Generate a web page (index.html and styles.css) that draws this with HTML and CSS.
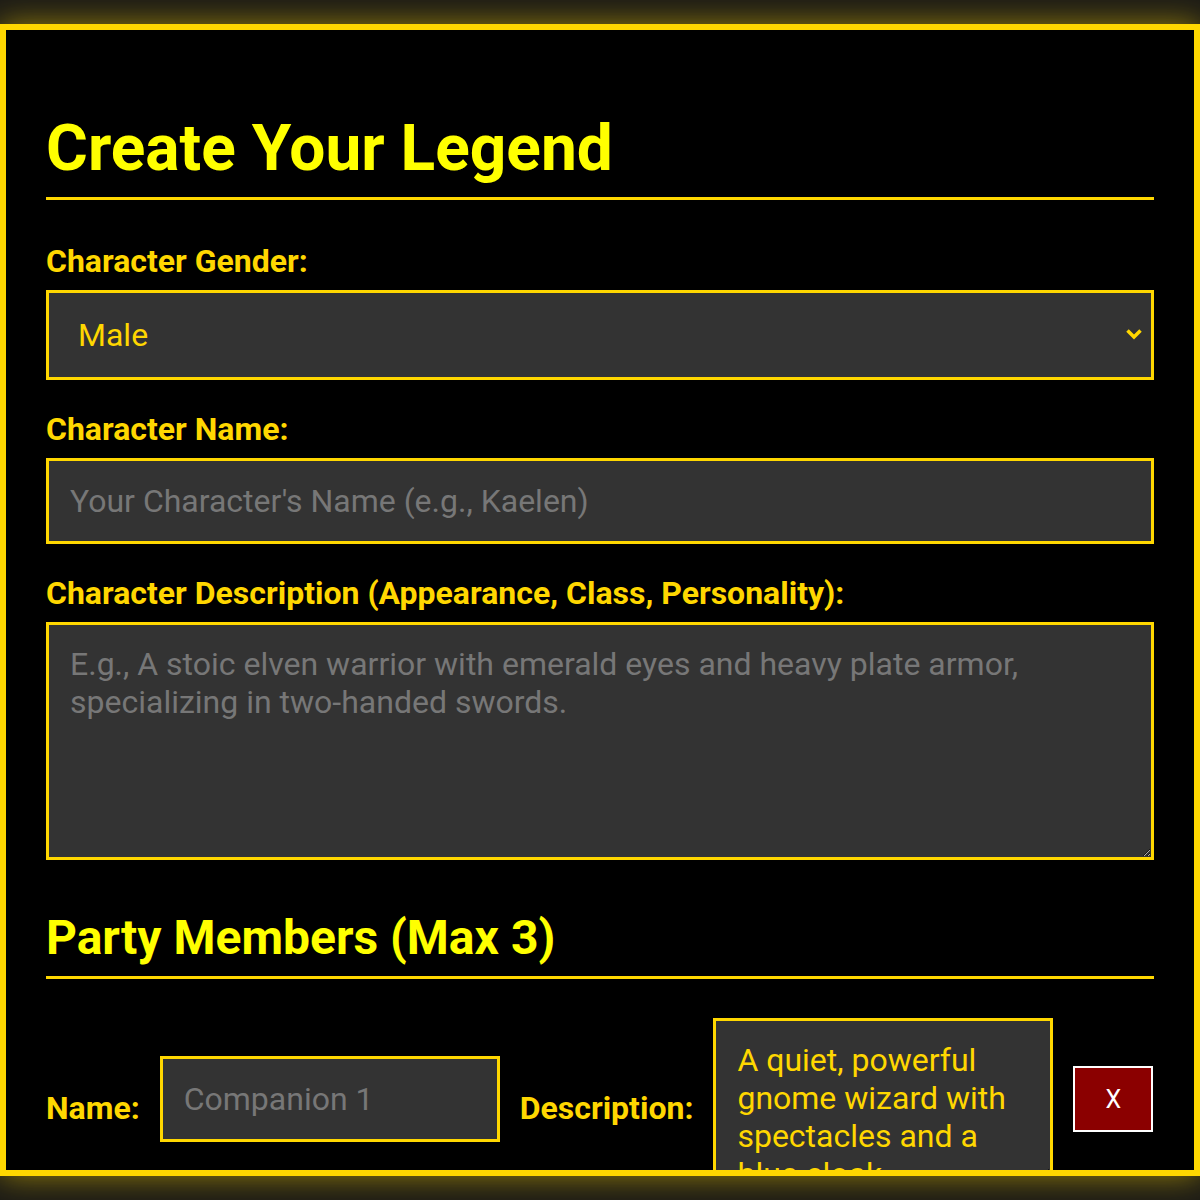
FILE: index.html
```html
<!DOCTYPE html>
<html lang="en">
<head>
<meta charset="utf-8">
<title>Create Your Legend</title>
<link rel="stylesheet" href="styles.css">
</head>
<body>
<div class="panel">
  <h1 class="title">Create Your Legend</h1>

  <div class="field">
    <label class="label" for="gender">Character Gender:</label>
    <div class="select-wrap">
      <select id="gender" class="control select">
        <option>Male</option>
        <option>Female</option>
        <option>Non-binary</option>
      </select>
      <svg class="chev" viewBox="0 0 18 12" width="18" height="12"><path d="M2.5 2.5 L9 9 L15.5 2.5" fill="none" stroke="#FFD700" stroke-width="3.5"/></svg>
    </div>
  </div>

  <div class="field">
    <label class="label" for="name">Character Name:</label>
    <input id="name" class="control input" type="text" placeholder="Your Character's Name (e.g., Kaelen)">
  </div>

  <div class="field">
    <label class="label" for="desc">Character Description (Appearance, Class, Personality):</label>
    <textarea id="desc" class="control textarea" placeholder="E.g., A stoic elven warrior with emerald eyes and heavy plate armor, specializing in two-handed swords."></textarea>
  </div>

  <h2 class="subtitle">Party Members (Max 3)</h2>

  <div class="member">
    <label class="mlabel" for="m1name">Name:</label>
    <input id="m1name" class="control minput" type="text" placeholder="Companion 1">
    <label class="mlabel" for="m1desc">Description:</label>
    <textarea id="m1desc" class="control mtext">A quiet, powerful gnome wizard with spectacles and a blue cloak.</textarea>
    <button class="remove" type="button">X</button>
  </div>
</div>
</body>
</html>
```

FILE: styles.css
```css
html, body {
  margin: 0;
  padding: 0;
}
body {
  background: #1c1b16;
  font-family: Roboto, "Noto Sans", "Liberation Sans", sans-serif;
  height: 1200px;
  overflow: hidden;
}
.panel {
  box-sizing: border-box;
  margin: 24px 0;
  height: 1152px;
  background: #000;
  border: 6px solid #FFD700;
  box-shadow: 0 0 30px rgba(255, 215, 0, 0.55);
  padding: 40px 40px;
  overflow: hidden;
}
.title {
  margin: 41px 0 42px;
  padding-bottom: 11px;
  color: #FFFF00;
  font-size: 64px;
  font-weight: 700;
  line-height: normal;
  border-bottom: 3px solid #FFD700;
}
.field {
  margin-bottom: 30px;
}
.label {
  display: block;
  color: #FFD700;
  font-size: 32px;
  font-weight: 700;
  margin-bottom: 10px;
}
.control {
  box-sizing: border-box;
  width: 100%;
  background: #333;
  border: 3px solid #FFD700;
  color: #FFD700;
  font-family: Roboto, "Noto Sans", "Liberation Sans", sans-serif;
  font-size: 32px;
  border-radius: 0;
  outline: none;
  margin: 0;
}
.control::placeholder {
  color: #777;
}
.select-wrap {
  position: relative;
}
.select {
  appearance: none;
  -webkit-appearance: none;
  display: block;
  height: 90px;
  padding: 0 29px;
}
.chev {
  position: absolute;
  right: 11px;
  top: 38px;
  width: 18px;
  height: 12px;
}
.input {
  display: block;
  height: 86px;
  padding: 0 21px;
}
.textarea {
  display: block;
  height: 238px;
  padding: 20px 21px;
  resize: vertical;
}
.subtitle {
  margin: 49px 0 0;
  padding-bottom: 10px;
  color: #FFFF00;
  font-size: 48px;
  font-weight: 700;
  line-height: normal;
  border-bottom: 3px solid #FFD700;
}
.member {
  display: flex;
  align-items: center;
  gap: 20px;
  margin-top: 39px;
}
.mlabel {
  color: #FFD700;
  font-size: 32px;
  font-weight: 700;
  flex: none;
  margin-top: 17px;
}
.minput {
  width: 340px;
  height: 86px;
  padding: 0 21px;
  flex: none;
}
.mtext {
  width: 340px;
  height: 162px;
  padding: 20px 21px;
  flex: none;
  resize: vertical;
}
.remove {
  flex: none;
  width: 80px;
  height: 66px;
  background: #8B0000;
  border: 2px solid #fff;
  color: #fff;
  font-family: Roboto, "Noto Sans", "Liberation Sans", sans-serif;
  font-size: 25px;
  padding: 0;
}
```
